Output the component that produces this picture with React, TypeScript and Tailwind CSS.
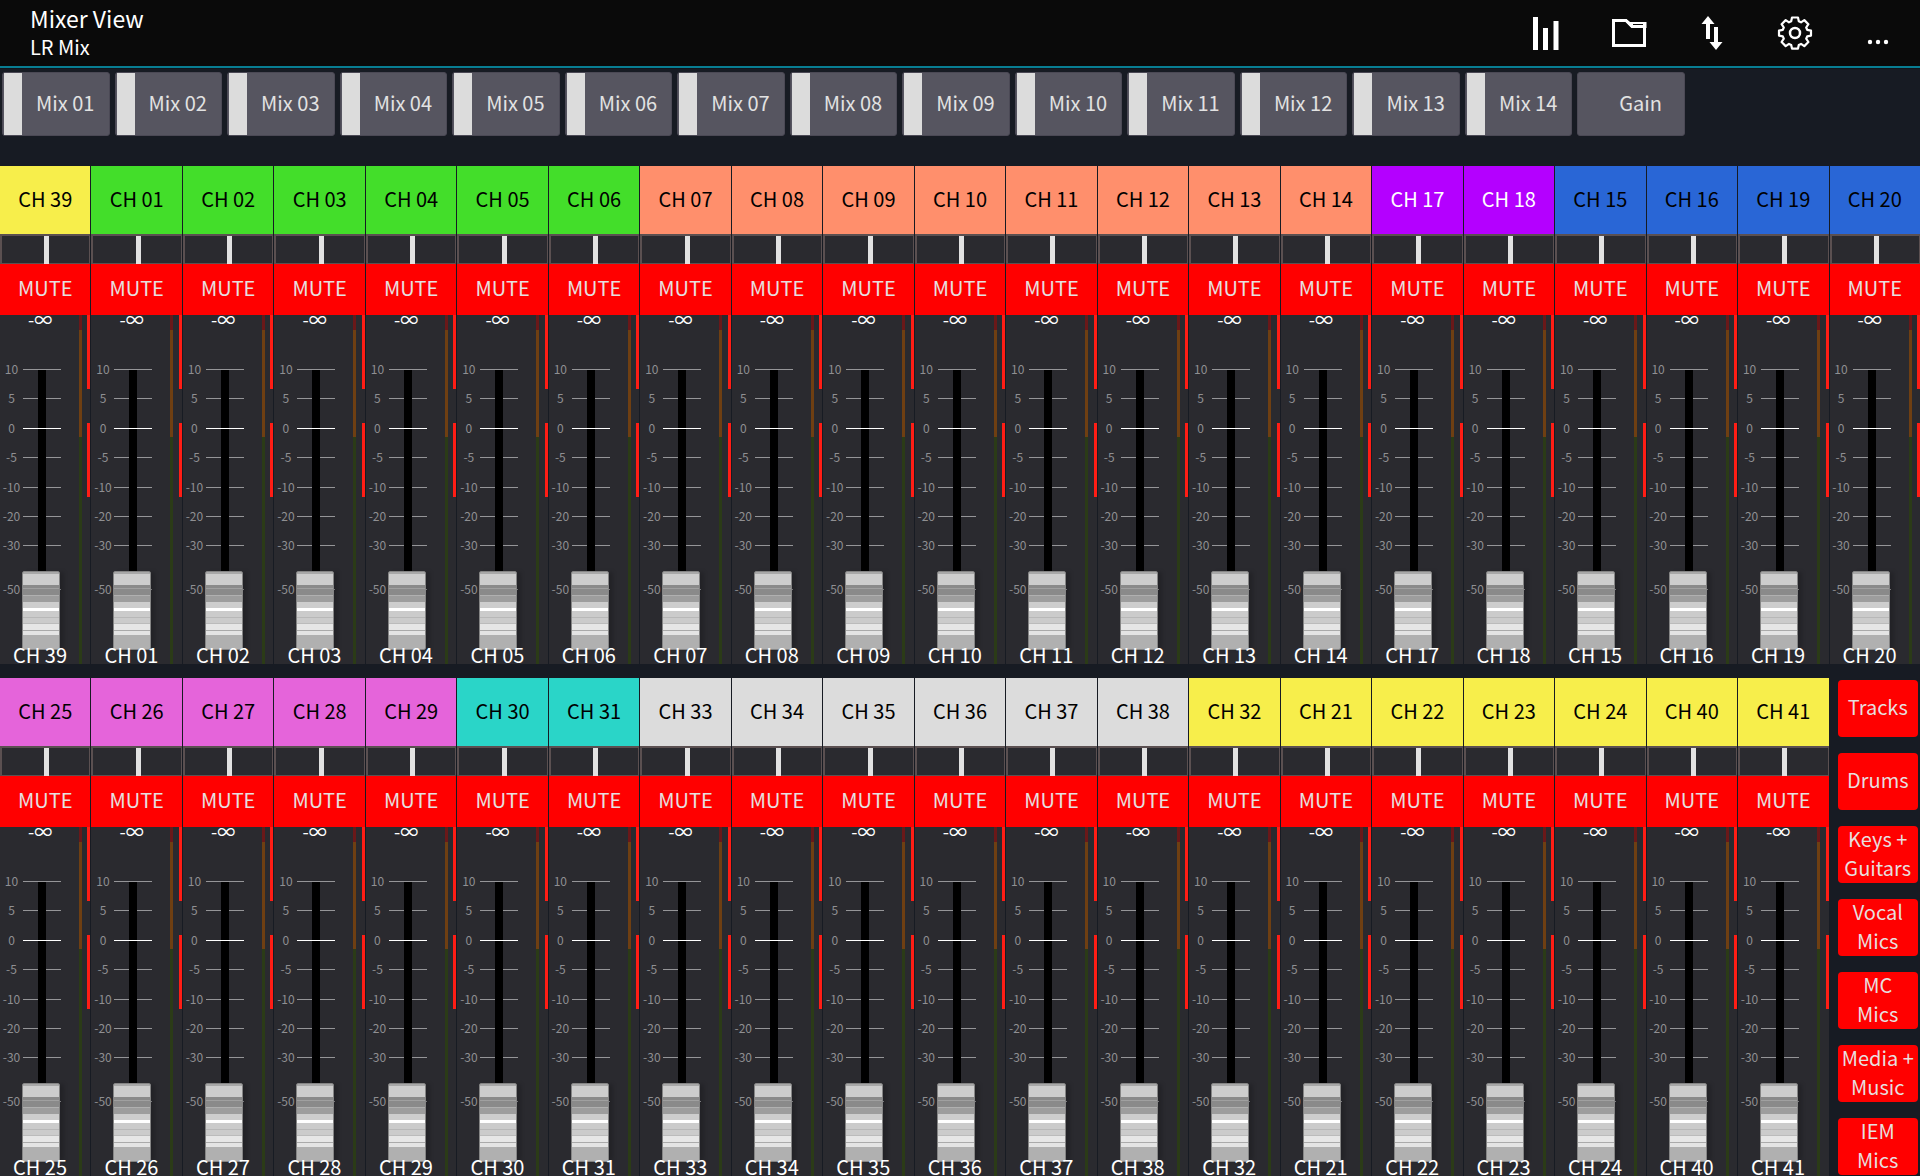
import type { ReactNode } from "react";

type Channel = { name: string; color: string };

const COLORS = {
  yellow: "bg-[#f7ee4b] text-black",
  green: "bg-[#43de2a] text-black",
  salmon: "bg-[#ff8f6c] text-black",
  purple: "bg-[#b400ff] text-white",
  blue: "bg-[#2966d6] text-black",
  pink: "bg-[#e564da] text-black",
  teal: "bg-[#2ad5c8] text-black",
  gray: "bg-[#dcdcdc] text-black",
};

const group = (color: string, ids: string[]): Channel[] =>
  ids.map((id) => ({ name: `CH ${id}`, color }));

const TOP_BANK = [
  ...group(COLORS.yellow, ["39"]),
  ...group(COLORS.green, ["01", "02", "03", "04", "05", "06"]),
  ...group(COLORS.salmon, ["07", "08", "09", "10", "11", "12", "13", "14"]),
  ...group(COLORS.purple, ["17", "18"]),
  ...group(COLORS.blue, ["15", "16", "19", "20"]),
];

const BOTTOM_BANK = [
  ...group(COLORS.pink, ["25", "26", "27", "28", "29"]),
  ...group(COLORS.teal, ["30", "31"]),
  ...group(COLORS.gray, ["33", "34", "35", "36", "37", "38"]),
  ...group(COLORS.yellow, ["32", "21", "22", "23", "24", "40", "41"]),
];

const MIXES = Array.from({ length: 14 }, (_, i) => `Mix ${String(i + 1).padStart(2, "0")}`);

const MUTE_GROUPS = ["Tracks", "Drums", "Keys +\nGuitars", "Vocal\nMics", "MC\nMics", "Media +\nMusic", "IEM\nMics"];

// dB marks with the distance from the top of the fader area
const SCALE = [
  { db: "10", top: "top-[54px]" },
  { db: "5", top: "top-[83px]" },
  { db: "0", top: "top-[113px]" },
  { db: "-5", top: "top-[142px]" },
  { db: "-10", top: "top-[172px]" },
  { db: "-20", top: "top-[201px]" },
  { db: "-30", top: "top-[230px]" },
  { db: "-50", top: "top-[274px]" },
];

function IconButton({ label, children }: { label: string; children: ReactNode }) {
  return (
    <button type="button" aria-label={label} className="flex h-full w-[83px] items-center justify-center">
      <svg viewBox="0 0 36 36" className="h-9 w-9" fill="none" stroke="none">
        {children}
      </svg>
    </button>
  );
}

function Header() {
  return (
    <header className="flex h-[69px] items-stretch justify-between border-b border-[#11151b] bg-[#0a0a0a]">
      <div className="flex flex-1 items-stretch justify-between border-b-2 border-[#087d92]">
        <div className="pt-1 pl-[30px] text-white">
          <h1 className="text-[23px] leading-7">Mixer View</h1>
          <p className="text-xl leading-[30px]">LR Mix</p>
        </div>
        <nav className="flex pr-px">
          <IconButton label="Meters">
            <path fill="#fff" d="M5 2h5v33H5zM15 13h5v22h-5zM25.500 6h5v29h-5z" />
          </IconButton>
          <IconButton label="Files">
            <path stroke="#fff" strokeWidth="3" d="M2.500 5.500H15l6 6h12.500v19h-31z" />
            <path fill="#fff" d="M15 4l4 3h16.500v6H21l-6-6z" />
            <path stroke="#0a0a0a" d="M22 9.500h10" />
          </IconButton>
          <IconButton label="Send and receive">
            <path fill="#fff" d="M14 1l6.500 8H16v15h-4V9H7.500zM22 35l-6.500-8H20V12h4v15h4.500z" />
          </IconButton>
          <IconButton label="Settings">
            <path
              stroke="#fff"
              strokeWidth="2.200"
              strokeLinejoin="round"
              d="M15 2.500h6l.8 3.800 2.200 1 3.300-2.200 4.100 4.100-2.200 3.300 1 2.300 3.800.8v5l-3.800.8-1 2.300 2.200 3.300-4.100 4.100-3.300-2.200-2.200 1-.8 3.700h-6l-.8-3.700-2.200-1-3.300 2.200-4.100-4.100 2.200-3.300-1-2.300-3.800-.8v-5l3.800-.8 1-2.300-2.200-3.300 4.100-4.100 3.300 2.200 2.200-1z"
            />
            <circle cx="18" cy="18" r="5" stroke="#fff" strokeWidth="2.500" />
          </IconButton>
          <IconButton label="More">
            <g fill="#fff">
              <circle cx="10" cy="27" r="2.200" />
              <circle cx="18" cy="27" r="2.200" />
              <circle cx="26" cy="27" r="2.200" />
            </g>
          </IconButton>
        </nav>
      </div>
    </header>
  );
}

function MixBar() {
  return (
    <div className="grid grid-cols-17 gap-[5px] pt-[3px] pr-[10px] pb-[30px] pl-[2px] text-xl text-[#e2e2e2]">
      {[...MIXES, "Gain"].map((label) => (
        <button
          key={label}
          type="button"
          className="flex h-16 rounded-[3px] border border-[#4b4955] bg-[#565560]"
        >
          <span className={`ml-px h-full w-[18px] ${label === "Gain" ? "" : "bg-[#dcdcdc]"}`} />
          <span className="flex h-full flex-1 items-center justify-center pb-[3px] whitespace-nowrap">{label}</span>
        </button>
      ))}
    </div>
  );
}

function Fader({ name }: { name: string }) {
  return (
    <div className="relative h-[349px] bg-[#2a2a2f]">
      <output className="absolute top-0 left-7 text-lg leading-2 text-white">-∞</output>

      {SCALE.map(({ db, top }) => (
        <div key={db} className={`absolute left-0 h-px w-[61px] ${top}`}>
          <span className="absolute top-[-8px] left-0 w-[23px] text-center text-xs leading-4 text-[#8f8f92]">
            {db}
          </span>
          <span className={`absolute left-[23px] h-px w-[38px] ${db === "0" ? "z-10 bg-white" : "bg-[#959598]"}`} />
        </div>
      ))}
      <div className="absolute top-[55px] left-[38px] h-[220px] w-2 bg-black" />

      <input
        type="range"
        min={0}
        max={100}
        defaultValue={0}
        aria-label={`${name} level`}
        className="absolute top-[15px] left-[22px] h-80 w-[38px] appearance-none bg-transparent [direction:rtl] [writing-mode:vertical-lr] [&::-webkit-slider-thumb]:h-[79px] [&::-webkit-slider-thumb]:w-[38px] [&::-webkit-slider-thumb]:appearance-none [&::-webkit-slider-thumb]:rounded-[2px] [&::-webkit-slider-thumb]:border [&::-webkit-slider-thumb]:border-[#858585] [&::-webkit-slider-thumb]:bg-[linear-gradient(#a8a8a8_0_2px,#cdcdcd_2px_13px,#8a8a8a_13px_16px,#a0a0a0_16px_17px,#8a8a8a_17px_23px,#b0b0b0_23px_24px,#9d9d9d_24px_30px,#cdcdcd_30px_36px,#fff_36px_39px,#cbcbcb_39px_45px,#b8b8b8_45px_46px,#cbcbcb_46px_51px,#bbb_51px_52px,#e6e6e6_52px_58px,#aaa_58px_59px,#e4e4e4_59px_63px,#b0b0b0_63px)] [&::-webkit-slider-thumb]:shadow-[5px_0_4px_-1px_rgba(0,0,0,0.18)]"
      />

      {/* level meter */}
      <div className="absolute top-0 left-[79px] flex h-full w-[3px] flex-col">
        <span className="h-[15px] bg-[#6a1819]" />
        <span className="h-[107px] bg-[#6f3f12]" />
        <span className="flex-1 bg-[#2b3b17]" />
      </div>
      {/* gate and compressor reduction */}
      <div className="absolute top-0 right-0 h-[74px] w-[3px] bg-[#ff1d15]" />
      <div className="absolute top-[108px] right-0 h-[74px] w-[3px] bg-[#ff1d15]" />

      <span className="absolute bottom-0 left-0 w-20 text-center text-xl leading-[18px] whitespace-nowrap text-white">
        {name}
      </span>
    </div>
  );
}

function Strip({ name, color }: Channel) {
  return (
    <section aria-label={name} className="min-w-0">
      <button type="button" className={`block h-[68px] w-full pb-[2px] text-xl whitespace-nowrap ${color}`}>
        {name}
      </button>
      <input
        type="range"
        min={0}
        max={100}
        defaultValue={50}
        aria-label={`${name} pan`}
        className="block h-[30px] w-full appearance-none border-t-2 border-r border-b border-l-2 border-[#5b5051] bg-[#2a2a2f] pl-[2px] [&::-webkit-slider-thumb]:h-7 [&::-webkit-slider-thumb]:w-[5px] [&::-webkit-slider-thumb]:appearance-none [&::-webkit-slider-thumb]:bg-[#e2e2e2]"
      />
      <button type="button" className="block h-[51px] w-full bg-[#ff0000] pb-[3px] text-xl text-[#e6e0e0]">
        MUTE
      </button>
      <Fader name={name} />
    </section>
  );
}

export default function App() {
  return (
    <div className="min-h-screen overflow-hidden bg-[#171b23] font-['Noto_Sans_CJK_SC','Noto_Sans',sans-serif]">
      <Header />
      <MixBar />
      <main className="flex flex-col gap-[14px]">
        <div className="grid grid-cols-21 gap-px">
          {TOP_BANK.map((ch) => (
            <Strip key={ch.name} {...ch} />
          ))}
        </div>
        <div className="grid grid-cols-21 gap-px">
          {BOTTOM_BANK.map((ch) => (
            <Strip key={ch.name} {...ch} />
          ))}
          <aside className="flex flex-col gap-4 pt-[2px] pr-[2px] pl-2">
            {MUTE_GROUPS.map((label) => (
              <button
                key={label}
                type="button"
                className="flex h-[57px] items-center justify-center rounded-[4px] bg-[#ff0000] pb-1 text-center text-xl leading-[29px] whitespace-pre text-[#e8dede]"
              >
                {label}
              </button>
            ))}
          </aside>
        </div>
      </main>
    </div>
  );
}
